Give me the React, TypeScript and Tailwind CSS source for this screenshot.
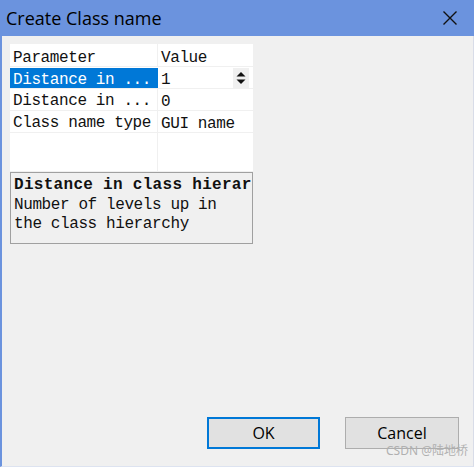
import React from "react";

const mono = { fontFamily: '"Liberation Mono", "Noto Sans CJK SC", monospace' };

export default function App() {
  const rows = [
    { p: "Distance in ...", v: "1", sel: true },
    { p: "Distance in ...", v: "0" },
    { p: "Class name type", v: "GUI name" },
  ];
  return (
    <div className="w-[474px] h-[467px] flex flex-col bg-[#f0f0f0] overflow-hidden relative">
      <div className="h-[36px] bg-[#6b93de] flex items-center justify-between pl-[6px] pr-[16px] shrink-0">
        <span className="text-[18px] text-black" style={{ fontFamily: '"Open Sans", "Noto Sans", sans-serif' }}>
          Create Class name
        </span>
        <svg width="16" height="16" viewBox="0 0 16 16">
          <path d="M1.5 1.5 L14.5 14.5 M14.5 1.5 L1.5 14.5" stroke="#111" strokeWidth="1.4" fill="none" />
        </svg>
      </div>
      <div className="flex-1 flex flex-col border-l-[2px] border-l-[#6b93de] border-r border-r-[#d8dce8] border-b border-b-[#dde3f0]">
        <div className="ml-[8px] mt-[8px] w-[243px] h-[127px] bg-white flex flex-col text-[16px] tracking-[-0.4px] text-[#111]" style={mono}>
          <div className="flex h-[23px] border-b border-[#f0f0f0]">
            <div className="w-[148px] pl-[3px] pt-[5px] leading-[18px] border-r border-[#f0f0f0] whitespace-nowrap">Parameter</div>
            <div className="flex-1 pl-[3px] pt-[5px] leading-[18px]">Value</div>
          </div>
          {rows.map((r, i) => (
            <div key={i} className="flex h-[22px] border-b border-[#f0f0f0]">
              <div
                className={
                  r.sel
                    ? "w-[148px] pl-[3px] pt-[3px] leading-[18px] bg-[#0078d7] text-white mt-[1px] whitespace-nowrap"
                    : "w-[148px] pl-[3px] pt-[3px] leading-[19px] border-r border-[#f0f0f0] whitespace-nowrap"
                }
              >
                {r.p}
              </div>
              <div className="flex-1 pl-[3px] flex items-center justify-between">
                <span className="pt-[5px] leading-[17px]">{r.v}</span>
                {r.sel && (
                  <svg width="16" height="20" viewBox="0 0 16 20" className="mr-[4px] mt-[1px]">
                    <rect x="0" y="0" width="16" height="20" fill="#f0f0f0" />
                    <path d="M3.5 8.5 L8 4 L12.5 8.5 Z" fill="#111" />
                    <path d="M3.5 11.5 L8 16 L12.5 11.5 Z" fill="#111" />
                  </svg>
                )}
              </div>
            </div>
          ))}
          <div className="flex flex-1">
            <div className="w-[148px] border-r border-[#f0f0f0]" />
            <div className="flex-1" />
          </div>
        </div>
        <div className="ml-[8px] mt-[1px] w-[243px] h-[72px] border border-[#a0a0a0] bg-[#f0f0f0] pl-[3px] pt-[3px] text-[16px] text-[#111] overflow-hidden" style={mono}>
          <div className="font-bold whitespace-nowrap leading-[19.5px] tracking-[0.3px]">Distance in class hierarchy</div>
          <div className="leading-[19.5px] tracking-[-0.4px]">Number of levels up in</div>
          <div className="leading-[19.5px] tracking-[-0.4px]">the class hierarchy</div>
        </div>
        <div className="flex-1" />
        <div className="flex justify-end gap-[25px] pr-[14px] mb-[17px]" style={{ fontFamily: '"Open Sans", "Noto Sans", sans-serif' }}>
          <button className="w-[113px] h-[32px] bg-[#e1e1e1] border-2 border-[#0078d7] text-[16px] text-black">OK</button>
          <button className="w-[114px] h-[32px] bg-[#e1e1e1] border border-[#adadad] text-[16px] text-black">Cancel</button>
        </div>
      </div>
      <div className="absolute right-[6px] bottom-[7px] text-[12px] text-[#b0b0b0]" style={{ fontFamily: '"Noto Sans", "Noto Sans CJK SC", sans-serif' }}>
        CSDN @陆地桥
      </div>
    </div>
  );
}
